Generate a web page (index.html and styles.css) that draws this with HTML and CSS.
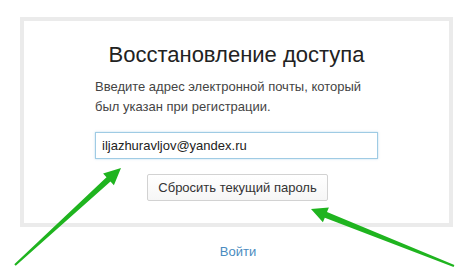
FILE: index.html
```html
<!DOCTYPE html>
<html lang="ru">
<head>
    <meta charset="UTF-8">
    <title>Восстановление доступа</title>
    <link rel="stylesheet" href="styles.css">
</head>
<body>

    <div class="page">
        <!-- Карточка восстановления -->
        <div class="card">
            <h1>Восстановление доступа</h1>
            <div class="form">
                <p>Введите адрес электронной почты, который был указан при регистрации.</p>
                <input type="text" class="email" value="iljazhuravljov@yandex.ru">
                <div class="actions">
                    <button type="button">Сбросить текущий пароль</button>
                </div>
            </div>
        </div>

        <div class="login"><a href="#">Войти</a></div>

        <!-- Стрелки поверх страницы -->
        <svg class="arrows" width="474" height="279" viewBox="0 0 474 279">
            <polygon fill="#1fb41f" points="14.3,264.3 106.5,177.2 103.1,173.5 121,168 113.9,185.3 110.5,181.6 15.7,265.7"/>
            <polygon fill="#1fb41f" points="454.4,265.1 327,212.1 328.9,207.5 311,209 322.9,222.3 324.8,217.7 453.6,266.9"/>
        </svg>
    </div>

</body>
</html>
```

FILE: styles.css
```css
body {
    margin: 0;
    background: #fff;
    font-family: "Liberation Sans", Arial, sans-serif;
    color: #333;
}

.page {
    position: relative;
    width: 474px;
    height: 279px;
    padding-top: 17px;
    box-sizing: border-box;
}

/* Карточка с серой рамкой */
.card {
    margin-left: 20px;
    width: 433px;
    height: 210px;
    box-sizing: border-box;
    border: 4px solid #ebebeb;
    padding-top: 22px;
    background: #fff;
}

h1 {
    margin: 0;
    font-size: 22px;
    line-height: 24px;
    font-weight: normal;
    text-align: center;
    color: #222;
}

.form {
    width: 283px;
    margin: 10px auto 0;
}

.form p {
    margin: 0;
    font-size: 13px;
    line-height: 20px;
    color: #444;
}

.email {
    display: block;
    margin-top: 15px;
    width: 283px;
    height: 27px;
    box-sizing: border-box;
    padding: 0 6px;
    border: 1px solid #9fcbe4;
    box-shadow: 0 0 2px rgba(120, 180, 220, 0.5);
    font-family: inherit;
    font-size: 13px;
    color: #222;
    outline: none;
}

.actions {
    margin-top: 15px;
    text-align: center;
}

button {
    width: 181px;
    height: 27px;
    margin-left: 2px;
    border: 1px solid #d2d2d2;
    border-radius: 2px;
    background: linear-gradient(#fff, #f6f6f6);
    font-family: inherit;
    font-size: 13px;
    color: #333;
    cursor: pointer;
}

.login {
    margin-top: 15px;
    margin-left: 2px;
    text-align: center;
    font-size: 13px;
    line-height: 20px;
}

.login a {
    color: #4a8cc0;
    text-decoration: none;
}

/* Зелёные стрелки */
.arrows {
    position: absolute;
    left: 0;
    top: 0;
}
```
